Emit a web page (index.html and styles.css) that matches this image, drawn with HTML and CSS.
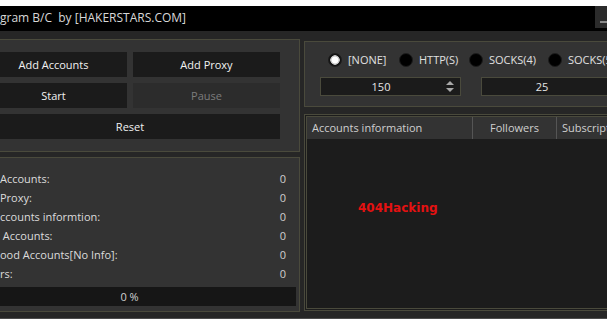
FILE: index.html
```html
<!DOCTYPE html>
<html lang="en">
<head>
  <meta charset="UTF-8">
  <title>Instagram B/C</title>
  <link rel="stylesheet" href="styles.css">
</head>
<body>
  <div class="strip"></div>
  <div class="titlebar">
    <span class="title">gram B/C&nbsp; by [HAKERSTARS.COM]</span>
    <span class="min-btn"><span class="dash"></span></span>
  </div>

  <div class="main">
    <div class="left">
      <div class="box controls">
        <button>Add Accounts</button>
        <button>Add Proxy</button>
        <button>Start</button>
        <button disabled>Pause</button>
        <button class="wide">Reset</button>
      </div>

      <div class="box stats">
        <div class="row"><span>Accounts:</span><span class="val">0</span></div>
        <div class="row"><span>Proxy:</span><span class="val">0</span></div>
        <div class="row"><span>ccounts informtion:</span><span class="val">0</span></div>
        <div class="row"><span>&nbsp;Accounts:</span><span class="val">0</span></div>
        <div class="row"><span>ood Accounts[No Info]:</span><span class="val">0</span></div>
        <div class="row"><span>rs:</span><span class="val">0</span></div>
        <div class="progress">0 %</div>
      </div>
    </div>

    <div class="right">
      <div class="box proxy">
        <div class="radios">
          <label class="radio"><span class="dot checked"></span>[NONE]</label>
          <label class="radio"><span class="dot"></span>HTTP(S)</label>
          <label class="radio"><span class="dot"></span>SOCKS(4)</label>
          <label class="radio"><span class="dot"></span>SOCKS(5)</label>
        </div>
        <div class="spins">
          <div class="spin">
            <span class="num">150</span>
            <span class="arrows"><span class="up"></span><span class="down"></span></span>
          </div>
          <div class="spin">
            <span class="num">25</span>
            <span class="arrows"><span class="up"></span><span class="down"></span></span>
          </div>
        </div>
      </div>

      <div class="table">
        <div class="thead">
          <div class="th c1">Accounts information</div>
          <div class="th c2">Followers</div>
          <div class="th c3">Subscriptions</div>
        </div>
        <div class="tbody">
          <span class="watermark">404Hacking</span>
        </div>
      </div>
    </div>
  </div>

  <div class="footer"></div>
</body>
</html>
```

FILE: styles.css
```css
:root {
  --window: #262626;
  --panel: #333333;
  --edge: #4a4a3c;
  --field: #1b1b1b;
  --text: #e6e6e6;
}

* {
  margin: 0;
  padding: 0;
  box-sizing: border-box;
}

body {
  font-family: 'Open Sans', 'Noto Sans', sans-serif;
  font-size: 11px;
  background: var(--window);
  color: var(--text);
  width: 607px;
  height: 319px;
  overflow: hidden;
}

.strip {
  height: 6px;
  background: #fff;
}

.titlebar {
  height: 25px;
  background: #000;
  display: flex;
  justify-content: space-between;
}

.title {
  color: #d8d8d8;
  font-size: 12px;
  line-height: 24px;
}

.min-btn {
  width: 12px;
  height: 22px;
  background: #2b2b2b;
  display: flex;
  align-items: flex-end;
  justify-content: flex-end;
  padding-bottom: 5px;
}

.min-btn .dash {
  width: 7px;
  height: 2px;
  background: #8a8a8a;
}

.main {
  display: grid;
  grid-template-columns: 341px 340px;
  gap: 4px;
  margin-left: -41px;
  padding-top: 8px;
}

.box {
  background: var(--panel);
  border: 1px solid var(--edge);
}

/* buttons */
.controls {
  display: grid;
  grid-template-columns: 147px 147px;
  gap: 6px;
  padding: 12px 19px 12px 20px;
}

button {
  font-family: inherit;
  font-size: 11px;
  height: 25px;
  border: none;
  background: var(--field);
  color: #f2f2f2;
}

button:disabled {
  background: #2c2c2c;
  color: #7c7c7c;
}

button.wide {
  grid-column: 1 / 3;
}

/* stats */
.stats {
  margin-top: 5px;
  padding: 11px 3px 5px 3px;
}

.row {
  display: flex;
  justify-content: space-between;
  height: 19px;
  line-height: 19px;
  padding: 0 10px 0 37px;
  color: #dcdcdc;
}

.row .val {
  color: #cfcfcf;
}

.progress {
  margin-top: 4px;
  height: 19px;
  line-height: 19px;
  background: #161616;
  text-align: center;
  color: #d0d0d0;
}

/* proxy options */
.right {
  padding-top: 2px;
}

.proxy {
  padding: 11px 0 10px 15px;
}

.radios {
  display: grid;
  grid-template-columns: 71px 70px 79px 80px;
  height: 14px;
  align-items: center;
  margin-left: 8px;
}

.radio {
  display: flex;
  align-items: center;
  gap: 6px;
  color: #e0e0e0;
  line-height: 14px;
  white-space: nowrap;
}

.dot {
  width: 14px;
  height: 14px;
  border-radius: 50%;
  background: #000;
  border: 1px solid #1c1c1c;
  flex: none;
}

.dot.checked {
  background: radial-gradient(circle, #fff 0 3px, #bdbdbd 4px 4.5px, #111 5px);
}

.spins {
  display: flex;
  gap: 20px;
  margin-top: 10px;
}

.spin {
  width: 141px;
  height: 19px;
  background: var(--field);
  border: 1px solid var(--edge);
  display: flex;
  align-items: center;
}

.spin .num {
  flex: 1;
  text-align: center;
  padding-left: 1px;
}

.arrows {
  width: 20px;
  display: flex;
  flex-direction: column;
  align-items: center;
  gap: 3px;
}

.arrows .up,
.arrows .down {
  width: 0;
  height: 0;
  border-left: 4px solid transparent;
  border-right: 4px solid transparent;
}

.arrows .up {
  border-bottom: 4px solid #a8a8a8;
}

.arrows .down {
  border-top: 4px solid #a8a8a8;
}

/* accounts table */
.table {
  margin-top: 7px;
  height: 197px;
  border: 3px double var(--edge);
  background: #1c1c1c;
  display: flex;
  flex-direction: column;
}

.thead {
  display: flex;
  height: 22px;
  background: var(--panel);
  color: #cfcfcf;
}

.th {
  line-height: 21px;
  white-space: nowrap;
}

.c1 {
  width: 165px;
  padding-left: 5px;
}

.c2 {
  width: 84px;
  text-align: center;
  border-left: 1px solid #555;
}

.c3 {
  flex: 1;
  padding-left: 5px;
  border-left: 1px solid #555;
}

.tbody {
  flex: 1;
  padding: 61px 0 0 51px;
}

.watermark {
  font-family: 'DejaVu Sans', sans-serif;
  font-weight: bold;
  font-size: 12px;
  color: #e41111;
}

.footer {
  margin-top: 6px;
  height: 3px;
  background: #4c4c4c;
}
```
